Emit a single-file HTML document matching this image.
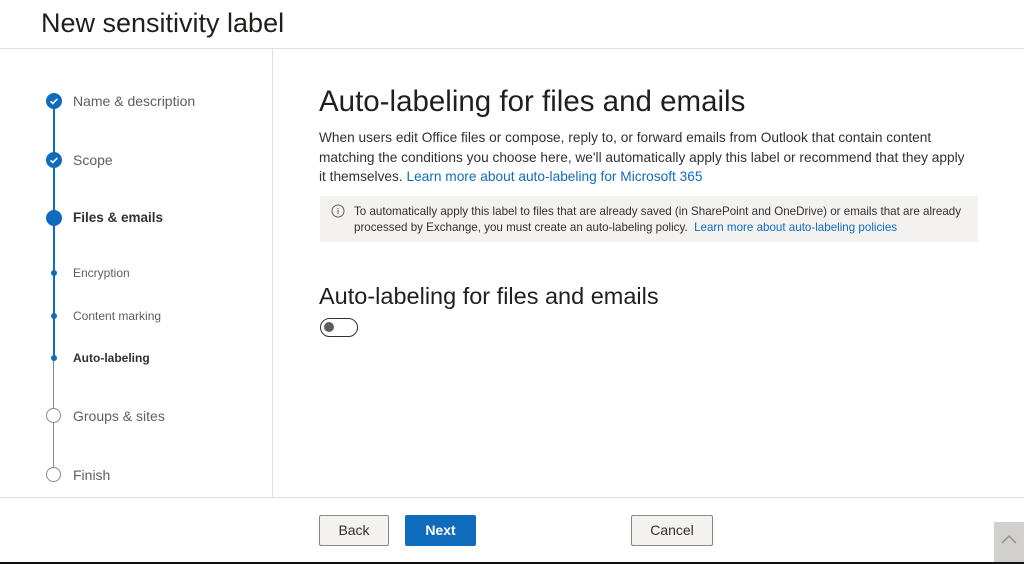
<!DOCTYPE html><html><head><style>
body{margin:0;width:1024px;height:564px;background:#fff;font-family:"Liberation Sans",sans-serif;color:#323130;position:relative;overflow:hidden}
.a{position:absolute}
.t{white-space:nowrap}
.btn{position:absolute;top:515px;border:1px solid #8a8886;background:#f3f2f1;font-size:14px;line-height:29px;text-align:center;box-sizing:border-box;height:31px;border-radius:2px}
</style></head><body>
<div class="a t" style="left:41px;top:8px;font-size:27px;color:#201f1e">New sensitivity label</div>
<div class="a" style="left:0;top:48px;width:1024px;height:1px;background:#e1dfdd"></div>
<div class="a" style="left:272px;top:49px;width:1px;height:448px;background:#e1dfdd"></div>
<div class="a" style="left:0;top:497px;width:1024px;height:1px;background:#e1dfdd"></div>
<div class="a" style="left:53px;top:108px;width:2px;height:250px;background:#0f6cbd"></div>
<div class="a" style="left:53px;top:358px;width:1px;height:110px;background:#8a8886"></div>
<svg class="a" style="left:46px;top:93px" width="16" height="16"><circle cx="8" cy="8" r="8" fill="#0f6cbd"/><path d="M4.5 8.3l2.3 2.2 4.5-4.6" stroke="#fff" stroke-width="1.6" fill="none"/></svg>
<svg class="a" style="left:46px;top:152px" width="16" height="16"><circle cx="8" cy="8" r="8" fill="#0f6cbd"/><path d="M4.5 8.3l2.3 2.2 4.5-4.6" stroke="#fff" stroke-width="1.6" fill="none"/></svg>
<div class="a" style="left:46px;top:210px;width:16px;height:16px;border-radius:50%;background:#0f6cbd"></div>
<div class="a" style="left:51px;top:270px;width:6px;height:6px;border-radius:50%;background:#0f6cbd"></div>
<div class="a" style="left:51px;top:313px;width:6px;height:6px;border-radius:50%;background:#0f6cbd"></div>
<div class="a" style="left:51px;top:355px;width:6px;height:6px;border-radius:50%;background:#0f6cbd"></div>
<div class="a" style="left:46px;top:408px;width:13px;height:13px;border-radius:50%;border:1.5px solid #8a8886;background:#fff"></div>
<div class="a" style="left:46px;top:467px;width:13px;height:13px;border-radius:50%;border:1.5px solid #8a8886;background:#fff"></div>
<div class="a t" style="left:73px;top:93px;font-size:14px;color:#605e5c">Name &amp; description</div>
<div class="a t" style="left:73px;top:152px;font-size:14px;color:#605e5c">Scope</div>
<div class="a t" style="left:73px;top:210px;font-size:13.5px;font-weight:bold">Files &amp; emails</div>
<div class="a t" style="left:73px;top:266px;font-size:12px;color:#605e5c">Encryption</div>
<div class="a t" style="left:73px;top:309px;font-size:12px;color:#605e5c">Content marking</div>
<div class="a t" style="left:73px;top:351px;font-size:12px;font-weight:bold">Auto-labeling</div>
<div class="a t" style="left:73px;top:408px;font-size:14px;color:#605e5c">Groups &amp; sites</div>
<div class="a t" style="left:73px;top:467px;font-size:14px;color:#605e5c">Finish</div>
<div class="a t" style="left:319px;top:85px;font-size:29.5px;color:#201f1e">Auto-labeling for files and emails</div>
<div class="a t" style="left:319px;top:128px;font-size:13.7px;line-height:19.5px">When users edit Office files or compose, reply to, or forward emails from Outlook that contain content<br>matching the conditions you choose here, we'll automatically apply this label or recommend that they apply<br>it themselves. <span style="color:#0f6cbd">Learn more about auto-labeling for Microsoft 365</span></div>
<div class="a" style="left:320px;top:196px;width:658px;height:46px;background:#f3f2f1"></div>
<svg class="a" style="left:331px;top:204px" width="14" height="14"><circle cx="7" cy="7" r="6" stroke="#605e5c" fill="none"/><path d="M7 6v4M7 4v1" stroke="#605e5c"/></svg>
<div class="a t" style="left:354px;top:204px;font-size:11.6px;line-height:16px">To automatically apply this label to files that are already saved (in SharePoint and OneDrive) or emails that are already<br>processed by Exchange, you must create an auto-labeling policy.&nbsp; <span style="color:#0f6cbd">Learn more about auto-labeling policies</span></div>
<div class="a t" style="left:319px;top:283px;font-size:23.5px;color:#201f1e">Auto-labeling for files and emails</div>
<div class="a" style="left:320px;top:318px;width:36px;height:17px;border:1.3px solid #323130;border-radius:10px"></div>
<div class="a" style="left:324px;top:322px;width:10px;height:10px;border-radius:50%;background:#605e5c"></div>
<div class="btn" style="left:319px;width:70px">Back</div>
<div class="btn" style="left:405px;width:71px;background:#0f6cbd;border-color:#0f6cbd;color:#fff;font-weight:bold">Next</div>
<div class="btn" style="left:631px;width:82px">Cancel</div>
<div class="a" style="left:994px;top:522px;width:30px;height:40px;background:#d2d0ce"></div>
<svg class="a" style="left:1000px;top:533px" width="18" height="12"><path d="M2 10l7-7 7 7" stroke="#8a8886" fill="none" stroke-width="1.3"/></svg>
<div class="a" style="left:0;top:562px;width:1024px;height:2px;background:#111"></div>
</body></html>
